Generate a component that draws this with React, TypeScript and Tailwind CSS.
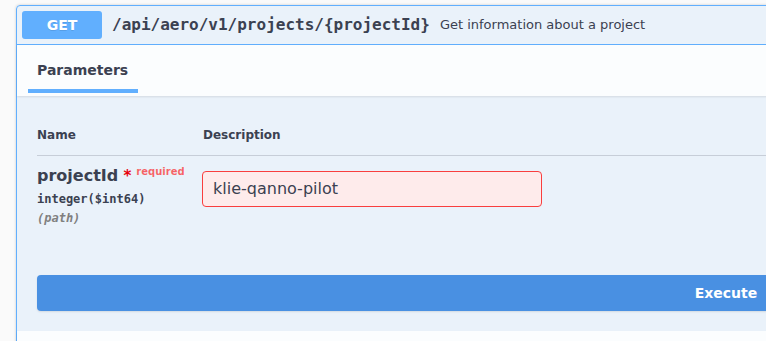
import React from "react";

export default function App() {
  const sans = { fontFamily: '"DejaVu Sans", sans-serif' };
  return (
    <div
      className="w-[766px] h-[341px] overflow-hidden bg-[#fafafa] pt-[5px] pl-[16px] text-[#3b4151]"
      style={sans}
    >
      <div className="w-[1420px] rounded-[4px] border border-[#61affe] bg-[rgba(97,175,254,0.1)] shadow-[0_0_3px_rgba(0,0,0,0.19)]">
        {/* summary */}
        <div className="flex items-center p-[5px] border-b border-[#61affe]">
          <span className="w-[80px] h-[28px] flex items-center justify-center rounded-[3px] bg-[#61affe] text-white text-[14px] font-bold font-['DejaVu_Sans',sans-serif] [text-shadow:0_1px_0_rgba(0,0,0,0.1)]">
            GET
          </span>
          <span className="px-[10px] text-[16px] font-bold font-['DejaVu_Sans_Mono',monospace] text-[#3b4151]">
            /api/aero/v1/projects/{"{projectId}"}
          </span>
          <span className="text-[13px] text-[#3b4151]">Get information about a project</span>
        </div>

        {/* section header */}
        <div className="relative h-[51px] flex items-center pl-[20px] bg-[rgba(255,255,255,0.8)] shadow-[0_1px_2px_rgba(0,0,0,0.1)]">
          <span className="text-[14px] font-bold">Parameters</span>
          <span className="absolute left-[11px] top-[44px] w-[110px] h-[4px] bg-[#61affe]" />
        </div>

        {/* parameters */}
        <div className="px-[20px] pt-[20px]">
          <div className="flex border-b border-[rgba(59,65,81,0.2)] py-[12px] text-[12px] leading-[15px] font-bold">
            <div className="w-[166px]">Name</div>
            <div>Description</div>
          </div>
          <div className="flex pt-[10px] pb-[10px]">
            <div className="w-[165px]">
              <div className="text-[16px] font-bold leading-[19px] whitespace-nowrap">
                projectId
                <span className="text-red-600 text-[15px] font-bold"> *</span>
                <span className="relative top-[-6px] px-[5px] text-[10px] font-semibold text-[rgba(255,0,0,0.6)]">required</span>
              </div>
              <div className="py-[5px] text-[12px] leading-[14px] font-semibold font-['DejaVu_Sans_Mono',monospace]">
                integer($int64)
              </div>
              <div className="text-[12px] leading-[14px] italic font-semibold text-[#808080] font-['DejaVu_Sans_Mono',monospace]">
                (path)
              </div>
            </div>
            <div className="pt-[5px]">
              <div className="w-[340px] h-[36px] flex items-center px-[10px] rounded-[4px] border border-[#f93e3e] bg-[#feebeb] text-[16px] text-[#3b4151]">
                klie-qanno-pilot
              </div>
            </div>
          </div>
        </div>

        {/* execute */}
        <div className="px-[20px] pt-[40px] pb-[20px]">
          <div className="w-full h-[36px] flex items-center justify-center rounded-[4px] bg-[#4990e2] text-white text-[14px] font-bold shadow-[0_1px_2px_rgba(0,0,0,0.1)]">
            Execute
          </div>
        </div>

        {/* responses header */}
        <div className="h-[50px] bg-[rgba(255,255,255,0.8)] shadow-[0_1px_2px_rgba(0,0,0,0.1)]" />
      </div>
    </div>
  );
}
